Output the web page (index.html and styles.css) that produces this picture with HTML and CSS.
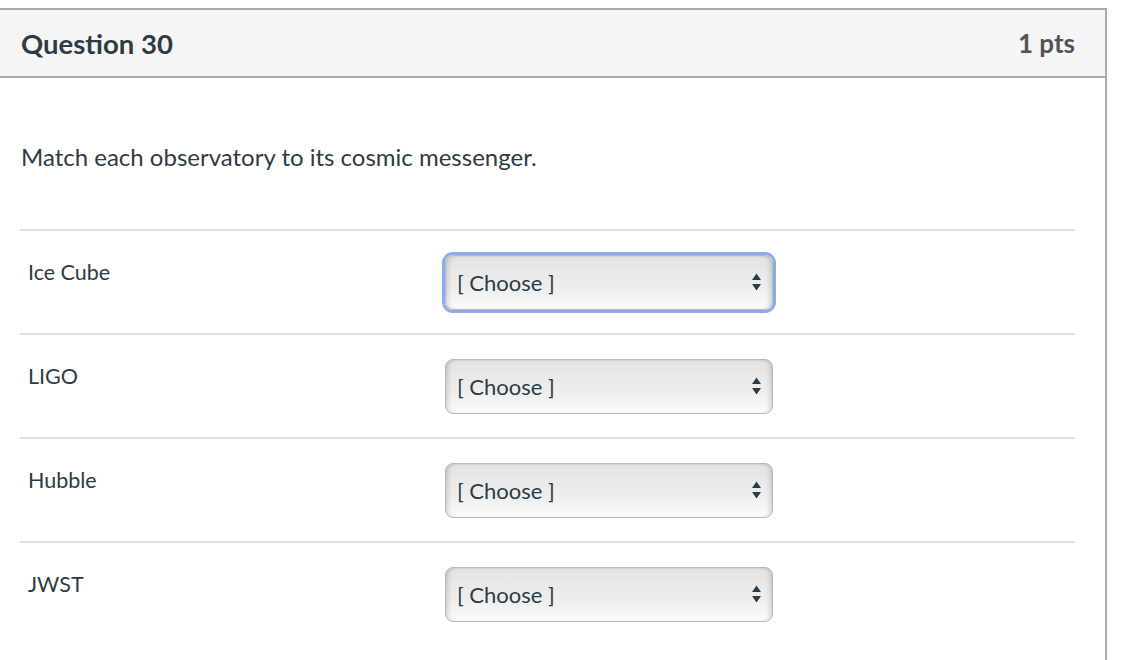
FILE: index.html
```html
<!DOCTYPE html>
<html lang="en">
<head>
<meta charset="utf-8">
<title>Question 30</title>
<link rel="stylesheet" href="styles.css">
</head>
<body>
<div class="card">
  <div class="header">
    <span class="title">Question 30</span>
    <span class="points">1 pts</span>
  </div>
  <div class="content">
    <p class="question">Match each observatory to its cosmic messenger.</p>
    <div class="answers">
      <div class="row">
        <div class="label">Ice Cube</div>
        <div class="select-wrap focused">
          <select class="select"><option>[ Choose ]</option></select>
          <svg class="arrows" width="11" height="20" viewBox="0 0 11 20"><path d="M5.5 1.5 L10 8 L1 8 Z M5.5 18.5 L10 12 L1 12 Z" fill="#2d3b45"/></svg>
        </div>
      </div>
      <div class="row">
        <div class="label">LIGO</div>
        <div class="select-wrap">
          <select class="select"><option>[ Choose ]</option></select>
          <svg class="arrows" width="11" height="20" viewBox="0 0 11 20"><path d="M5.5 1.5 L10 8 L1 8 Z M5.5 18.5 L10 12 L1 12 Z" fill="#2d3b45"/></svg>
        </div>
      </div>
      <div class="row">
        <div class="label">Hubble</div>
        <div class="select-wrap">
          <select class="select"><option>[ Choose ]</option></select>
          <svg class="arrows" width="11" height="20" viewBox="0 0 11 20"><path d="M5.5 1.5 L10 8 L1 8 Z M5.5 18.5 L10 12 L1 12 Z" fill="#2d3b45"/></svg>
        </div>
      </div>
      <div class="row">
        <div class="label">JWST</div>
        <div class="select-wrap">
          <select class="select"><option>[ Choose ]</option></select>
          <svg class="arrows" width="11" height="20" viewBox="0 0 11 20"><path d="M5.5 1.5 L10 8 L1 8 Z M5.5 18.5 L10 12 L1 12 Z" fill="#2d3b45"/></svg>
        </div>
      </div>
    </div>
  </div>
</div>
</body>
</html>
```
FILE: styles.css
```css
html, body {
  margin: 0;
  padding: 0;
  background: #ffffff;
}
body {
  font-family: Lato, "Noto Sans", sans-serif;
  color: #2d3b45;
  overflow: hidden;
}
.card {
  margin-top: 8px;
  margin-left: -2px;
  width: 1105px;
  border: 2px solid #a9a9a9;
  border-bottom: none;
}
.header {
  height: 66px;
  background: #f5f5f5;
  border-bottom: 2px solid #a9a9a9;
  display: flex;
  align-items: center;
  justify-content: space-between;
  padding: 0 30px 0 21px;
}
.title {
  font-size: 27.5px;
  font-weight: 700;
  color: #2d3b45;
}
.points {
  font-size: 26px;
  font-weight: 700;
  color: #505458;
}
.content {
  padding: 0 30px 40px 20px;
}
.question {
  margin: 0;
  padding-top: 64px;
  padding-bottom: 57px;
  font-size: 24px;
  line-height: 30px;
  padding-left: 1px;
}
.row {
  display: flex;
  align-items: flex-start;
  border-top: 2px solid #dedede;
  height: 102px;
}
.label {
  width: 417px;
  padding-left: 8px;
  padding-top: 29px;
  font-size: 21.5px;
  line-height: 24px;
}
.select-wrap {
  position: relative;
  margin-top: 24px;
  width: 328px;
  height: 55px;
  border-radius: 8px;
}
.select-wrap.focused {
  box-shadow: 0 0 0 3px #8eaaef;
}
.select {
  appearance: none;
  -webkit-appearance: none;
  display: block;
  width: 100%;
  height: 100%;
  margin: 0;
  padding: 0 0 0 11px;
  border: 1px solid #bababa;
  border-radius: 8px;
  background: linear-gradient(#e3e3e3, #eeeeee 60%, #fbfbfb);
  box-shadow: inset 5px 0 5px -3px rgba(0,0,0,0.15), inset -5px 0 5px -3px rgba(0,0,0,0.15), inset 0 1px 2px rgba(0,0,0,0.06);
  font-family: Lato, "Noto Sans", sans-serif;
  font-size: 22px;
  color: #2d3b45;
  outline: none;
}
.arrows {
  position: absolute;
  right: 11px;
  top: 17px;
  pointer-events: none;
}
```
